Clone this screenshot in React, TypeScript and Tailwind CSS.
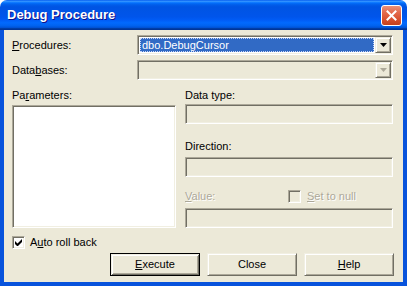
import React from "react";

const sunken =
  "border border-t-[#aca899] border-l-[#aca899] border-r-white border-b-white shadow-[inset_1px_1px_0_#716f64,inset_-1px_-1px_0_#f1efe2]";
const raised =
  "border border-t-[#f1efe2] border-l-[#f1efe2] border-r-[#716f64] border-b-[#716f64] shadow-[inset_1px_1px_0_#fff,inset_-1px_-1px_0_#aca899]";
const defaultRaised =
  "border border-black shadow-[inset_1px_1px_0_#f1efe2,inset_-1px_-1px_0_#716f64,inset_2px_2px_0_#fff,inset_-2px_-2px_0_#aca899]";

function Arrow({ disabled }: { disabled?: boolean }) {
  return (
    <svg width="7" height="4" viewBox="0 0 7 4">
      <path d="M0 0h7L3.5 4z" fill={disabled ? "#aca899" : "#000"} />
    </svg>
  );
}

function Combo({ value, disabled }: { value?: string; disabled?: boolean }) {
  return (
    <div className={`flex h-[20px] w-[256px] items-stretch ${disabled ? "bg-[#ece9d8]" : "bg-white"} ${sunken} p-[1px]`}>
      <div className="flex flex-1 items-center pl-[1px] pr-[1px]">
        {value && (
          <div className="flex h-[14px] flex-1 items-center border border-dotted border-[#c9d6f5] bg-[#316ac5] pl-[1px] text-white">
            {value}
          </div>
        )}
      </div>
      <div className={`flex w-[16px] items-center justify-center bg-[#ece9d8] ${raised}`}>
        <Arrow disabled={disabled} />
      </div>
    </div>
  );
}

function Field() {
  return <div className={`h-[20px] w-full bg-[#ece9d8] ${sunken}`} />;
}

function Disabled({ children }: { children: React.ReactNode }) {
  return <span className="text-[#aca899] [text-shadow:1px_1px_0_#fff]">{children}</span>;
}

function Button({ children, isDefault }: { children: React.ReactNode; isDefault?: boolean }) {
  return (
    <div className={`flex h-[23px] w-[90px] items-center justify-center bg-[#ece9d8] ${isDefault ? defaultRaised : raised}`}>
      {children}
    </div>
  );
}

export default function App() {
  return (
    <div className="flex h-[286px] w-[407px] flex-col text-[11px] leading-[13px] text-black [font-family:'Liberation_Sans',Arial,sans-serif]">
      <div className="flex h-[30px] items-center justify-between rounded-t-[7px] bg-[linear-gradient(180deg,#0058ee_0%,#3593ff_4%,#288eff_6%,#127dff_8%,#036ffc_10%,#0262ee_14%,#0057e5_20%,#0054e3_24%,#0055eb_56%,#005bf5_66%,#026afe_76%,#0062ef_86%,#0052d6_92%,#0040ab_94%,#003092_100%)] pl-[7px] pr-[5px]">
        <span className="text-[13px] font-bold leading-[16px] text-white [text-shadow:1px_1px_0_#0f1089]">Debug Procedure</span>
        <div className="flex h-[21px] w-[21px] items-center justify-center rounded-[3px] border border-white bg-[linear-gradient(180deg,#e9907a_0%,#e36a4c_35%,#d8512f_70%,#c5401d_100%)]">
          <svg width="11" height="11" viewBox="0 0 11 11">
            <path d="M1.5 1.5l8 8M9.5 1.5l-8 8" stroke="#fff" strokeWidth="2" strokeLinecap="square" />
          </svg>
        </div>
      </div>

      <div className="flex flex-1 flex-col border-x-4 border-b-4 border-[#0853dc] bg-[#ece9d8] pl-[8px] pr-[10px] pt-[5px]">
        <div className="flex h-[20px] items-center">
          <span className="w-[125px]">
            <u>P</u>rocedures:
          </span>
          <Combo value="dbo.DebugCursor" />
        </div>
        <div className="mt-[5px] flex h-[20px] items-center">
          <span className="w-[125px]">
            Data<u>b</u>ases:
          </span>
          <Combo disabled />
        </div>

        <div className="mt-[9px] flex">
          <div className="flex w-[164px] flex-col">
            <span className="h-[13px]">
              Pa<u>r</u>ameters:
            </span>
            <div className={`mt-[3px] h-[123px] bg-white ${sunken}`} />
          </div>
          <div className="ml-[9px] flex flex-1 flex-col">
            <span className="h-[13px]">Data type:</span>
            <div className="mt-[2px]">
              <Field />
            </div>
            <span className="mt-[16px] h-[13px]">Direction:</span>
            <div className="mt-[4px]">
              <Field />
            </div>
            <div className="mt-[13px] flex h-[13px] items-center">
              <span className="w-[103px]">
                <Disabled>
                  <u>V</u>alue:
                </Disabled>
              </span>
              <div className={`h-[13px] w-[13px] bg-[#ece9d8] ${sunken}`} />
              <span className="ml-[6px]">
                <Disabled>
                  <u>S</u>et to null
                </Disabled>
              </span>
            </div>
            <div className="mt-[5px]">
              <Field />
            </div>
          </div>
        </div>

        <div className="mt-[8px] flex h-[13px] items-center">
          <div className={`flex h-[13px] w-[13px] items-center justify-center bg-white ${sunken}`}>
            <svg width="7" height="7" viewBox="0 0 7 7">
              <path d="M0 2v3l2 2h1l4-4V0L2.5 4.5z" fill="#000" />
            </svg>
          </div>
          <span className="ml-[5px]">
            A<u>u</u>to roll back
          </span>
        </div>

        <div className="-mr-[1px] mt-[4px] flex justify-end gap-[7px]">
          <Button isDefault>
            <u>E</u>xecute
          </Button>
          <Button>Close</Button>
          <Button>
            <u>H</u>elp
          </Button>
        </div>
      </div>
    </div>
  );
}
